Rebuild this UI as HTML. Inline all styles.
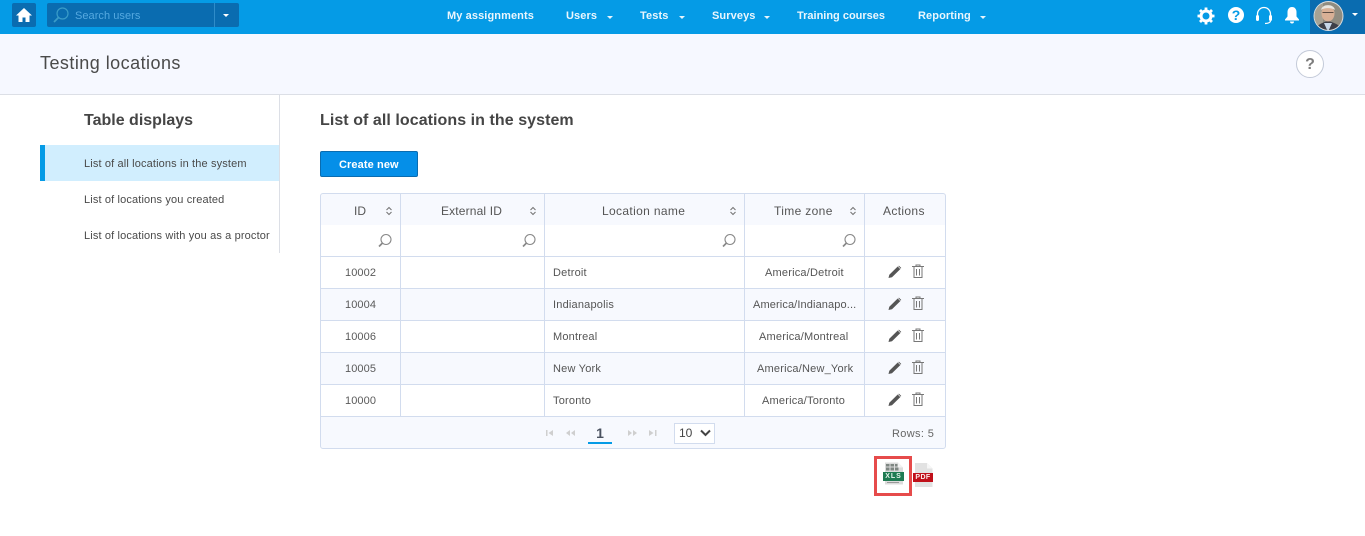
<!DOCTYPE html>
<html><head><meta charset="utf-8"><title>Testing locations</title>
<style>
html,body{margin:0;padding:0;background:#fff}
#p{position:relative;width:1365px;height:536px;overflow:hidden;background:#fff;font-family:"Liberation Sans",sans-serif;color:#4a4a4a;font-size:11px}
#p div,#p svg,#p span.t{position:absolute}
.t{white-space:nowrap;line-height:14px}
.nav{color:#eaf6fd;font-size:11px;font-weight:bold;top:9px;letter-spacing:.1px}
.car{width:0;height:0;border-left:3px solid transparent;border-right:3px solid transparent;border-top:3.5px solid #e6f4fc;top:16px}
.side{font-size:11px;color:#4a4a4a;left:84px;letter-spacing:.14px}
.h{font-size:12px;color:#555;top:204px;letter-spacing:.35px}
.c{font-size:11px;color:#555;letter-spacing:.2px}
.n{font-size:11px;color:#5a5a5a;letter-spacing:.1px;left:345px}
.v{width:1px;background:#d2dcee;top:193px;height:256px}
.l{height:1px;background:#d2dcee;left:320px;width:626px}
.alt{left:321px;width:624px;height:31px;background:#f7f9fe}
</style></head><body><div id="p">

<div style="left:0;top:0;width:1365px;height:34px;background:#059be6"></div>
<div style="left:12px;top:3px;width:24px;height:24px;background:#0a6cb0;border-radius:2px"></div>
<svg style="left:15px;top:6px" width="18" height="18" viewBox="0 0 18 18"><path d="M9 2 L1 9.5 H3.5 V16 H7.5 V11.5 H10.5 V16 H14.5 V9.5 H17 Z" fill="#fff"/></svg>
<div style="left:47px;top:3px;width:192px;height:24px;background:#0a6cb0;border-radius:2px"></div>
<div style="left:214px;top:3px;width:1px;height:24px;background:#2f8cc9"></div>
<svg style="left:52px;top:6px" width="18" height="18" viewBox="0 0 18 18"><circle cx="10.5" cy="7.5" r="5.5" fill="none" stroke="#3a9cc8" stroke-width="1.2"/><path d="M6.5 11.5 L2 16" stroke="#3a9cc8" stroke-width="1.8"/></svg>
<span class="t" style="left:75px;top:9px;color:#55a9e0;font-size:11px;letter-spacing:.05px">Search users</span>
<div class="car" style="left:223px;top:14px;border-top-color:#fff"></div>

<span class="t nav" style="left:447px">My assignments</span>
<span class="t nav" style="left:566px">Users</span><div class="car" style="left:607px"></div>
<span class="t nav" style="left:640px">Tests</span><div class="car" style="left:679px"></div>
<span class="t nav" style="left:712px">Surveys</span><div class="car" style="left:764px"></div>
<span class="t nav" style="left:797px;letter-spacing:0">Training courses</span>
<span class="t nav" style="left:918px">Reporting</span><div class="car" style="left:980px"></div>

<svg style="left:1197px;top:7px" width="18" height="18" viewBox="0 0 18 18"><circle cx="9" cy="9" r="5" fill="none" stroke="#fff" stroke-width="3"/><path d="M9 0.5V4M9 14V17.5M0.5 9H4M14 9H17.5M3 3L5.5 5.5M12.5 12.5L15 15M15 3L12.5 5.5M5.5 12.5L3 15" stroke="#fff" stroke-width="2.8"/></svg>
<div style="left:1228px;top:7px;width:16px;height:16px;border-radius:50%;background:#fff"></div>
<span class="t" style="left:1228px;top:8px;width:16px;text-align:center;font-size:14px;font-weight:bold;color:#059be6">?</span>
<svg style="left:1255px;top:6px" width="18" height="19" viewBox="0 0 18 19"><path d="M2.5 11V8A6.5 6.5 0 0 1 15.5 8V11" fill="none" stroke="#fff" stroke-width="1.3"/><rect x="1" y="9" width="3" height="6" rx="1.5" fill="#fff"/><rect x="14" y="9" width="3" height="6" rx="1.5" fill="#fff"/><path d="M15.5 15C15 17 13 17.5 10 17.5" fill="none" stroke="#fff" stroke-width="1.2"/></svg>
<svg style="left:1284px;top:6px" width="16" height="18" viewBox="0 0 16 18"><path d="M8 1C5 1 3.5 3.5 3.5 6V10.5L1 13.5V14.5H15V13.5L12.5 10.5V6C12.5 3.5 11 1 8 1Z" fill="#fff"/><path d="M6 15.5H10A2 2 0 0 1 6 15.5Z" fill="#fff"/></svg>

<div style="left:1310px;top:0;width:55px;height:34px;background:#0a6cb0"></div>
<svg style="left:1313px;top:0" width="32" height="32" viewBox="0 0 32 32"><defs><clipPath id="a"><circle cx="15.5" cy="16" r="14"/></clipPath></defs><circle cx="15.5" cy="16" r="15" fill="#d8dde0"/><g clip-path="url(#a)"><rect width="32" height="32" fill="#8f8c80"/><rect x="0" y="0" width="10" height="32" fill="#a8a294"/><path d="M2 32C3 25 8 23 15 21C22 23 28 25 30 32Z" fill="#3e4048"/><path d="M11 23L15 32L19 23Z" fill="#c8d8e8"/><ellipse cx="15" cy="13.5" rx="6.5" ry="8" fill="#d8b096"/><path d="M8 10C9 3.5 21 3.5 22 10C19 7.5 11 7.5 8 10Z" fill="#e8e6e0"/><rect x="9.5" y="12" width="11" height="1" fill="#5a4c44"/></g></svg>
<div class="car" style="left:1352px;top:13px;border-top-color:#fff"></div>

<div style="left:0;top:34px;width:1365px;height:60px;background:#f6f8ff"></div>
<div style="left:0;top:94px;width:1365px;height:1px;background:#dcdfe6"></div>
<span class="t" style="left:40px;top:53px;font-size:18px;line-height:21px;color:#4a4a4a;letter-spacing:.46px">Testing locations</span>
<div style="left:1296px;top:50px;width:26px;height:26px;border:1px solid #c3cad8;border-radius:50%;background:#fff"></div>
<span class="t" style="left:1296px;top:56px;width:28px;line-height:18px;text-align:center;font-size:16px;font-weight:bold;color:#7d7d7d">?</span>

<div style="left:279px;top:95px;width:1px;height:158px;background:#dcdfe6"></div>
<span class="t" style="left:84px;top:111px;font-size:16px;line-height:19px;font-weight:bold;color:#454545">Table displays</span>
<div style="left:40px;top:145px;width:239px;height:36px;background:#d1eefe"></div>
<div style="left:40px;top:145px;width:5px;height:36px;background:#059be6"></div>
<span class="t side" style="top:157px">List of all locations in the system</span>
<span class="t side" style="top:193px">List of locations you created</span>
<span class="t side" style="top:229px">List of locations with you as a proctor</span>

<span class="t" style="left:320px;top:111px;font-size:16px;line-height:19px;font-weight:bold;color:#454545;letter-spacing:.06px">List of all locations in the system</span>
<div style="left:320px;top:151px;width:96px;height:24px;background:#058fe8;border:1px solid #0a6cb0;border-radius:2px"></div>
<span class="t" style="left:339px;top:158px;color:#fff;font-size:11px;font-weight:bold;letter-spacing:.1px">Create new</span>

<div style="left:321px;top:194px;width:624px;height:31px;background:#f7f9fe;border-radius:2px 2px 0 0"></div>
<div class="alt" style="top:289px"></div>
<div class="alt" style="top:353px"></div>
<div style="left:321px;top:417px;width:624px;height:31px;background:#f7f9fe;border-radius:0 0 2px 2px"></div>

<div class="l" style="top:256px"></div>
<div class="l" style="top:288px"></div>
<div class="l" style="top:320px"></div>
<div class="l" style="top:352px"></div>
<div class="l" style="top:384px"></div>
<div class="l" style="top:416px"></div>
<div class="v" style="left:400px;height:224px"></div>
<div class="v" style="left:544px;height:224px"></div>
<div class="v" style="left:744px;height:224px"></div>
<div class="v" style="left:864px;height:224px"></div>
<div style="left:320px;top:193px;width:624px;height:254px;border:1px solid #d2dcee;border-radius:3px"></div>

<span class="t h" style="left:354px;letter-spacing:0">ID</span>
<span class="t h" style="left:441px;letter-spacing:.15px">External ID</span>
<span class="t h" style="left:602px">Location name</span>
<span class="t h" style="left:774px">Time zone</span>
<span class="t h" style="left:883px">Actions</span>

<svg style="left:385px;top:206px" width="8" height="10" viewBox="0 0 8 10"><path d="M1.5 4L4 1.5L6.5 4M1.5 6L4 8.5L6.5 6" fill="none" stroke="#777" stroke-width="1.1"/></svg>
<svg style="left:529px;top:206px" width="8" height="10" viewBox="0 0 8 10"><path d="M1.5 4L4 1.5L6.5 4M1.5 6L4 8.5L6.5 6" fill="none" stroke="#777" stroke-width="1.1"/></svg>
<svg style="left:729px;top:206px" width="8" height="10" viewBox="0 0 8 10"><path d="M1.5 4L4 1.5L6.5 4M1.5 6L4 8.5L6.5 6" fill="none" stroke="#777" stroke-width="1.1"/></svg>
<svg style="left:849px;top:206px" width="8" height="10" viewBox="0 0 8 10"><path d="M1.5 4L4 1.5L6.5 4M1.5 6L4 8.5L6.5 6" fill="none" stroke="#777" stroke-width="1.1"/></svg>

<svg style="left:377px;top:233px" width="15" height="15" viewBox="0 0 15 15"><circle cx="9" cy="6.5" r="5" fill="none" stroke="#888" stroke-width="1.1"/><path d="M5.5 10L2 13.5" stroke="#888" stroke-width="1.7"/></svg>
<svg style="left:521px;top:233px" width="15" height="15" viewBox="0 0 15 15"><circle cx="9" cy="6.5" r="5" fill="none" stroke="#888" stroke-width="1.1"/><path d="M5.5 10L2 13.5" stroke="#888" stroke-width="1.7"/></svg>
<svg style="left:721px;top:233px" width="15" height="15" viewBox="0 0 15 15"><circle cx="9" cy="6.5" r="5" fill="none" stroke="#888" stroke-width="1.1"/><path d="M5.5 10L2 13.5" stroke="#888" stroke-width="1.7"/></svg>
<svg style="left:841px;top:233px" width="15" height="15" viewBox="0 0 15 15"><circle cx="9" cy="6.5" r="5" fill="none" stroke="#888" stroke-width="1.1"/><path d="M5.5 10L2 13.5" stroke="#888" stroke-width="1.7"/></svg>

<span class="t n" style="top:266px">10002</span>
<span class="t c" style="left:553px;top:266px">Detroit</span>
<span class="t c" style="left:765px;top:266px">America/Detroit</span>
<span class="t n" style="top:298px">10004</span>
<span class="t c" style="left:553px;top:298px">Indianapolis</span>
<span class="t c" style="left:753px;top:298px;letter-spacing:.12px">America/Indianapo...</span>
<span class="t n" style="top:330px">10006</span>
<span class="t c" style="left:553px;top:330px">Montreal</span>
<span class="t c" style="left:759px;top:330px">America/Montreal</span>
<span class="t n" style="top:362px">10005</span>
<span class="t c" style="left:553px;top:362px">New York</span>
<span class="t c" style="left:757px;top:362px">America/New_York</span>
<span class="t n" style="top:394px">10000</span>
<span class="t c" style="left:553px;top:394px">Toronto</span>
<span class="t c" style="left:762px;top:394px">America/Toronto</span>

<svg style="left:888px;top:265px" width="14" height="14" viewBox="0 0 14 14"><path d="M0.5 13L1.3 9.7L9.7 1.5L12.3 4.100L4 12.2Z M10.5 0.9L11 0.7L13.2 2.9L13 3.4L12.7 3.6L10.3 1.1Z" fill="#555"/></svg>
<svg style="left:911px;top:264px" width="14" height="15" viewBox="0 0 14 15"><path d="M1 2.5H13M5 2.5V1H9V2.5M3 2.5V13.5H11V2.5M5.5 5V11.5M8.5 5V11.5" fill="none" stroke="#777" stroke-width="1"/></svg>
<svg style="left:888px;top:297px" width="14" height="14" viewBox="0 0 14 14"><path d="M0.5 13L1.3 9.7L9.7 1.5L12.3 4.100L4 12.2Z M10.5 0.9L11 0.7L13.2 2.9L13 3.4L12.7 3.6L10.3 1.1Z" fill="#555"/></svg>
<svg style="left:911px;top:296px" width="14" height="15" viewBox="0 0 14 15"><path d="M1 2.5H13M5 2.5V1H9V2.5M3 2.5V13.5H11V2.5M5.5 5V11.5M8.5 5V11.5" fill="none" stroke="#777" stroke-width="1"/></svg>
<svg style="left:888px;top:329px" width="14" height="14" viewBox="0 0 14 14"><path d="M0.5 13L1.3 9.7L9.7 1.5L12.3 4.100L4 12.2Z M10.5 0.9L11 0.7L13.2 2.9L13 3.4L12.7 3.6L10.3 1.1Z" fill="#555"/></svg>
<svg style="left:911px;top:328px" width="14" height="15" viewBox="0 0 14 15"><path d="M1 2.5H13M5 2.5V1H9V2.5M3 2.5V13.5H11V2.5M5.5 5V11.5M8.5 5V11.5" fill="none" stroke="#777" stroke-width="1"/></svg>
<svg style="left:888px;top:361px" width="14" height="14" viewBox="0 0 14 14"><path d="M0.5 13L1.3 9.7L9.7 1.5L12.3 4.100L4 12.2Z M10.5 0.9L11 0.7L13.2 2.9L13 3.4L12.7 3.6L10.3 1.1Z" fill="#555"/></svg>
<svg style="left:911px;top:360px" width="14" height="15" viewBox="0 0 14 15"><path d="M1 2.5H13M5 2.5V1H9V2.5M3 2.5V13.5H11V2.5M5.5 5V11.5M8.5 5V11.5" fill="none" stroke="#777" stroke-width="1"/></svg>
<svg style="left:888px;top:393px" width="14" height="14" viewBox="0 0 14 14"><path d="M0.5 13L1.3 9.7L9.7 1.5L12.3 4.100L4 12.2Z M10.5 0.9L11 0.7L13.2 2.9L13 3.4L12.7 3.6L10.3 1.1Z" fill="#555"/></svg>
<svg style="left:911px;top:392px" width="14" height="15" viewBox="0 0 14 15"><path d="M1 2.5H13M5 2.5V1H9V2.5M3 2.5V13.5H11V2.5M5.5 5V11.5M8.5 5V11.5" fill="none" stroke="#777" stroke-width="1"/></svg>

<svg style="left:545px;top:429px" width="116" height="8" viewBox="0 0 116 8"><g fill="#cfcfcf"><rect x="1" y="1" width="1.5" height="6"/><path d="M8 1V7L3.5 4Z"/><path d="M25 1V7L21 4ZM30 1V7L26 4Z"/><path d="M83 1V7L87 4ZM88 1V7L92 4Z"/><path d="M104 1V7L108.5 4Z"/><rect x="110" y="1" width="1.5" height="6"/></g></svg>
<span class="t" style="left:588px;top:425px;width:24px;text-align:center;font-size:14px;line-height:16px;color:#4a5260;font-weight:bold">1</span>
<div style="left:588px;top:442px;width:24px;height:2px;background:#059be6"></div>
<div style="left:674px;top:423px;width:39px;height:19px;background:#fff;border:1px solid #d2dcee"></div>
<span class="t" style="left:679px;top:426px;font-size:12px;color:#444">10</span>
<svg style="left:700px;top:429px" width="11" height="8" viewBox="0 0 11 8"><path d="M1 1.5L5.5 6L10 1.5" fill="none" stroke="#444" stroke-width="2"/></svg>
<span class="t" style="left:892px;top:427px;font-size:11px;color:#666;letter-spacing:.35px">Rows: 5</span>

<div style="left:874px;top:456px;width:32px;height:34px;border:3px solid #e64b4b"></div>
<svg style="left:882px;top:462px" width="24" height="24" viewBox="0 0 24 24"><path d="M3 0.5H16L21 5.5V22.5H3Z" fill="#dcdcdc"/><path d="M16 0.5L21 5.5H16Z" fill="#f2f2f2"/><g fill="#7e8682"><rect x="4" y="2" width="3.5" height="2.5"/><rect x="8.5" y="2" width="3.5" height="2.5"/><rect x="13" y="2" width="2.5" height="2.5"/><rect x="4" y="5.5" width="3.5" height="3"/><rect x="8.5" y="5.5" width="3.5" height="3"/><rect x="13" y="5.5" width="3.5" height="3"/></g><rect x="1" y="10" width="21" height="9" fill="#1f7a52"/><rect x="5" y="20" width="12" height="1" fill="#999"/></svg>
<span class="t" style="left:883px;top:472px;width:21px;text-align:center;font-size:7px;line-height:9px;font-weight:bold;color:#e8f5ee;letter-spacing:1px">XLS</span>
<svg style="left:912px;top:462px" width="24" height="26" viewBox="0 0 24 26"><path d="M3 1H15L20.5 6.5V25H3Z" fill="#e2e2e2"/><path d="M15 1L20.5 6.5H15Z" fill="#f6f6f6"/><rect x="1" y="11" width="20" height="9" fill="#c0101a"/></svg>
<span class="t" style="left:913px;top:473px;width:20px;text-align:center;font-size:7px;line-height:9px;font-weight:bold;color:#fdeaea;letter-spacing:.4px">PDF</span>

</div></body></html>
